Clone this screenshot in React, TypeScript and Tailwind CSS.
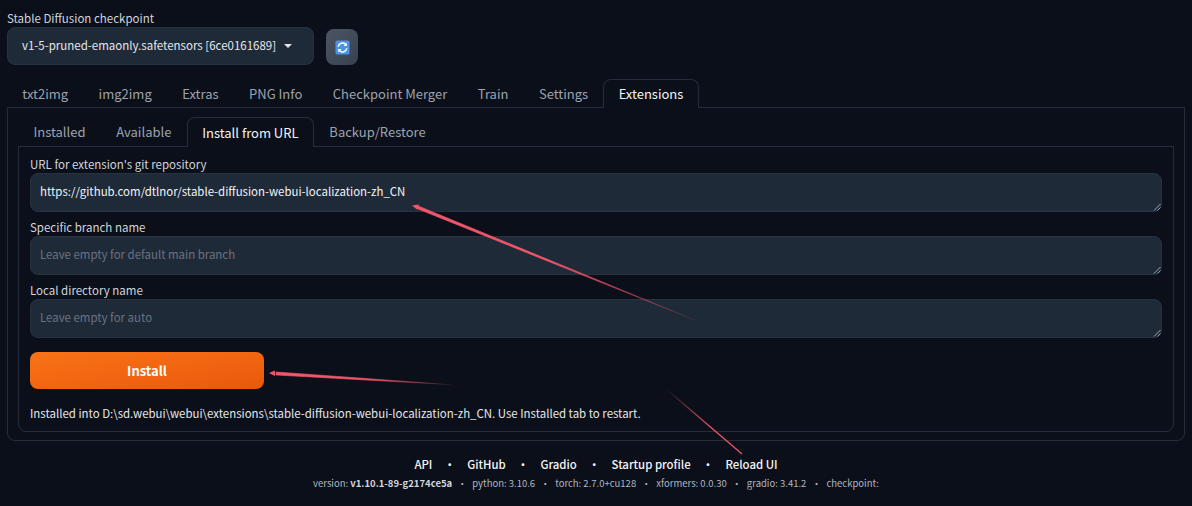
const font = "font-['Noto_Sans_CJK_SC','Liberation_Sans',sans-serif]"

const mainTabs = ['txt2img', 'img2img', 'Extras', 'PNG Info', 'Checkpoint Merger', 'Train', 'Settings', 'Extensions']
const subTabs = ['Installed', 'Available', 'Install from URL', 'Backup/Restore']

function Tab({ label, active, tall }: { label: string; active: boolean; tall?: boolean }) {
  return (
    <button
      className={`${tall ? 'h-[30px] px-[14.4px]' : 'h-[29px] px-[14.25px]'} text-[13px] leading-[28px] whitespace-nowrap rounded-t-lg -mb-px ${
        active
          ? 'border border-b-0 border-[#252c3a] bg-[#0b0f19] text-[#f3f4f6] relative z-10'
          : 'border border-transparent text-[#9ca3af]'
      }`}
    >
      {label}
    </button>
  )
}

function Field({ label, value, placeholder }: { label: string; value?: string; placeholder?: string }) {
  return (
    <div>
      <p className="text-[11.5px] leading-[18px] text-[#d1d5db]">{label}</p>
      <div className="relative h-[39px] rounded-lg border border-[#283341] bg-[#1f2a38] px-[9px] text-[11.45px] leading-[35px]">
        {value ? <span className="text-[#f3f4f6]">{value}</span> : <span className="text-[#6b7280]">{placeholder}</span>}
        <svg className="absolute right-0 bottom-0" width="8" height="8" viewBox="0 0 8 8">
          <path d="M7.5 1 1 7.5M7.5 4.5 4.5 7.5" stroke="#9ca3af" strokeWidth="1" />
        </svg>
      </div>
    </div>
  )
}

function RefreshIcon() {
  return (
    <svg width="15" height="15" viewBox="0 0 16 16">
      <rect x="0.5" y="0.5" width="15" height="15" rx="2" fill="#4a94ea" />
      <path d="M3.4 7.2A4.7 4.7 0 0 1 11.3 4.6" fill="none" stroke="#fff" strokeWidth="1.6" />
      <path d="M12.6 2.8v3.6H9z" fill="#fff" />
      <path d="M12.6 8.8A4.7 4.7 0 0 1 4.7 11.4" fill="none" stroke="#fff" strokeWidth="1.6" />
      <path d="M3.4 13.2V9.6H7z" fill="#fff" />
    </svg>
  )
}

// red annotation arrows drawn on top of the screenshot
function Arrows() {
  return (
    <svg className="absolute inset-0 pointer-events-none" width="1192" height="506" viewBox="0 0 1192 506">
      <defs>
        <linearGradient id="a1" gradientUnits="userSpaceOnUse" x1="702" y1="323" x2="412" y2="206">
          <stop offset="0" stopColor="#f2566a" stopOpacity="0" />
          <stop offset="0.55" stopColor="#f2566a" />
        </linearGradient>
        <linearGradient id="a2" gradientUnits="userSpaceOnUse" x1="456" y1="385" x2="270" y2="373">
          <stop offset="0" stopColor="#f2566a" stopOpacity="0" />
          <stop offset="0.5" stopColor="#f2566a" />
        </linearGradient>
        <linearGradient id="a3" gradientUnits="userSpaceOnUse" x1="666" y1="389" x2="742" y2="454">
          <stop offset="0" stopColor="#f2566a" stopOpacity="0" />
          <stop offset="0.6" stopColor="#f2566a" />
        </linearGradient>
      </defs>
      <path d="M702 323 L418 206 L417 208.5 Z" fill="url(#a1)" stroke="url(#a1)" strokeWidth="0.8" />
      <path d="M412 205.5 L419 204.5 L417 209.5 Z" fill="#f2566a" />
      <path d="M456 385 L276 372 L276 375 Z" fill="url(#a2)" stroke="url(#a2)" strokeWidth="0.6" />
      <path d="M269 373 L275 370.5 L275 376 Z" fill="#f2566a" />
      <path d="M666 389 L742 454" stroke="url(#a3)" strokeWidth="1.2" />
    </svg>
  )
}

export default function App() {
  return (
    <div className={`relative h-[506px] w-[1192px] overflow-hidden bg-[#0b0f19] ${font}`}>
      <div className="px-[7px] pt-[10px]">
        <p className="text-[11.5px] leading-[17px] text-[#d1d5db]">Stable Diffusion checkpoint</p>
        <div className="flex items-end gap-3">
          <div className="flex h-[38px] w-[307px] items-center rounded-lg border border-[#283341] bg-[#1f2a38] pl-[14px] text-[11.5px] whitespace-nowrap text-[#e5e7eb]">
            <span>v1-5-pruned-emaonly.safetensors [6ce0161689]</span>
            <span className="ml-[8px] h-0 w-0 border-x-[4px] border-t-[4px] border-x-transparent border-t-[#e5e7eb]" />
          </div>
          <button className="flex h-[36px] w-[32px] items-center justify-center rounded-lg bg-gradient-to-br from-[#4b5563] to-[#374151]">
            <RefreshIcon />
          </button>
        </div>

        <div className="mt-[14px] flex">
          {mainTabs.map((t) => (
            <Tab key={t} label={t} active={t === 'Extensions'} />
          ))}
        </div>
        <div className="h-[334px] w-[1178px] rounded-b-lg border border-[#252c3a] px-[10px] pt-[9px]">
          <div className="flex">
            {subTabs.map((t) => (
              <Tab key={t} label={t} active={t === 'Install from URL'} tall />
            ))}
          </div>
          <div className="h-[286px] w-[1156px] rounded-b-lg border border-[#252c3a] px-[11px] pt-[8px]">
            <div className="flex flex-col gap-[6px]">
              <Field label="URL for extension's git repository" value="https://github.com/dtlnor/stable-diffusion-webui-localization-zh_CN" />
              <Field label="Specific branch name" placeholder="Leave empty for default main branch" />
              <Field label="Local directory name" placeholder="Leave empty for auto" />
            </div>
            <button className="mt-[14px] h-[37px] w-[234px] rounded-lg bg-gradient-to-br from-[#f97316] to-[#ea580c] text-[13px] font-semibold text-white">
              Install
            </button>
            <p className="mt-[14px] text-[11.45px] leading-[20px] text-[#e5e7eb]">
              Installed into D:\sd.webui\webui\extensions\stable-diffusion-webui-localization-zh_CN. Use Installed tab to restart.
            </p>
          </div>
        </div>
      </div>

      <footer className="mt-[14px] text-center">
        <div className="flex items-center justify-center gap-[11.7px] text-[11.4px] leading-[18px] font-medium text-[#f3f4f6]">
          <span>API</span>
          <span>•</span>
          <span>GitHub</span>
          <span>•</span>
          <span>Gradio</span>
          <span>•</span>
          <span>Startup profile</span>
          <span>•</span>
          <span>Reload UI</span>
        </div>
        <p className="mt-[2px] text-[9.5px] leading-[16px] text-[#b0b6c0]">
          version: <b className="font-semibold text-[#d1d5db]">v1.10.1-89-g2174ce5a</b>
          <span className="mx-[5.3px]">•</span>python: 3.10.6
          <span className="mx-[5.3px]">•</span>torch: 2.7.0+cu128
          <span className="mx-[5.3px]">•</span>xformers: 0.0.30
          <span className="mx-[5.3px]">•</span>gradio: 3.41.2
          <span className="mx-[5.3px]">•</span>checkpoint:
        </p>
      </footer>
      <Arrows />
    </div>
  )
}
